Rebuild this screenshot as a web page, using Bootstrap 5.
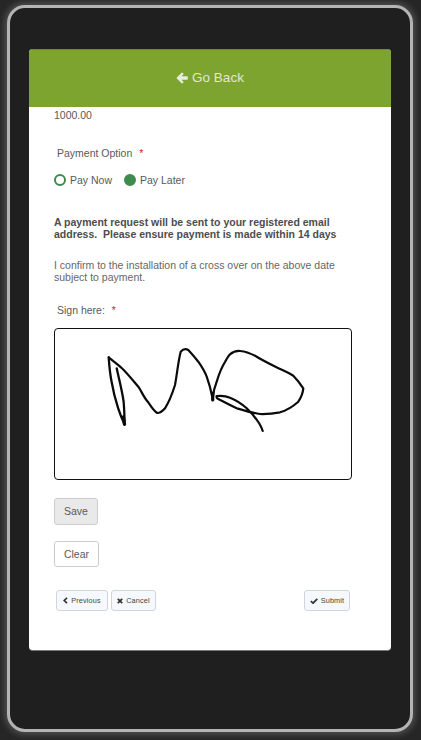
<!DOCTYPE html>
<html lang="en">
<head>
<meta charset="utf-8">
<title>Payment</title>
<link href="https://cdn.jsdelivr.net/npm/bootstrap@5.3.0/dist/css/bootstrap.min.css" rel="stylesheet">
<style>
html,body{height:100%;margin:0;background:#262626;overflow:hidden}
body{font-family:"Liberation Sans",Arial,sans-serif;font-size:10.5px;line-height:12px;color:#595959;padding:5px 8px 8px 7px}
.phone-frame{height:727px;border:3px solid #b4b4b4;border-radius:18px;background:#1f1f1f;box-shadow:0 0 7px 2px rgba(255,255,255,.22);padding:41px 19px 0}
.pay-card{height:602px;border:0 solid #777;border-bottom-width:1px;border-radius:4px;background:#fff;overflow:hidden}
.pay-head{height:58px;background:#7ca42e;color:#e2e6d8;font-size:13.5px;border-top:1px solid #777;padding-bottom:1px}
.pay-body{padding:0 0 0 25px;width:323px}
.amount{padding-top:2px;height:40px}
.field-label{padding-left:3px;height:12px;line-height:12px}
.req{color:#e02020;margin-left:4px}
.radio-row{margin-top:15px;height:12px}
.radio-opt{color:#595959}
.radio-dot{appearance:none;width:12px;height:12px;margin:0;border:2px solid #3f8a4e;border-radius:50%;background:#fff;flex:none}
.radio-dot:checked{background:#3f8a4e}
.notice{margin-top:30px;font-weight:700;line-height:12px;color:#4d4d4d}
.confirm{margin-top:19px;line-height:12px;color:#666}
.sign-label{margin-top:21px}
.sign-box{display:block;margin-top:12px;width:298px;height:152px;border:1px solid #111;border-radius:4px;background:#fff}
.act-btn{font-size:10.5px;line-height:12px;color:#595959;border:1px solid #ccc;border-radius:3px;padding:0 0 1px;display:flex;align-items:center;justify-content:center}
.act-btn:hover{color:#595959}
.btn-save{width:44px;height:27px;margin-top:18px;background:#e9e9e9}
.btn-clear{width:45px;height:26px;margin-top:16px;background:#fff}
.step-row{margin-top:23px;padding-left:2px;width:296px}
.step-btn{height:21px;font-size:7.300px;line-height:9px;color:#444;font-weight:400;letter-spacing:.15px;background:#f5f9fd;border:1px solid #d0d5da;border-radius:3px;padding:0;gap:3px;display:flex;align-items:center;justify-content:center}
.step-prev{width:52px}.step-cancel{width:45px;margin-left:3px}.step-submit{width:46px}
</style>
</head>
<body>
<div class="phone-frame">
  <div class="pay-card d-flex flex-column">
    <div class="pay-head d-flex align-items-center justify-content-center gap-1">
      <svg width="12" height="12" viewBox="0 0 12 12" aria-hidden="true"><path fill="#e8ebdf" d="M.4 6 5.6.8a.7.7 0 0 1 1 0l.7.7a.7.7 0 0 1 0 1L5.4 4.3h5.7a.7.7 0 0 1 .7.7v2a.7.7 0 0 1-.7.7H5.4l1.9 1.8a.7.7 0 0 1 0 1l-.7.7a.7.7 0 0 1-1 0z"/></svg>
      <span>Go Back</span>
    </div>
    <div class="pay-body">
      <div class="amount">1000.00</div>
      <div class="field-label">Payment Option <span class="req">*</span></div>
      <div class="radio-row d-flex align-items-center">
        <label class="radio-opt d-flex align-items-center gap-1 me-2"><input class="radio-dot" type="radio" name="pay"> Pay Now</label>
        <label class="radio-opt d-flex align-items-center gap-1 ms-1"><input class="radio-dot" type="radio" name="pay" checked> Pay Later</label>
      </div>
      <div class="notice">A payment request will be sent to your registered email address.&nbsp; Please ensure payment is made within 14 days</div>
      <div class="confirm">I confirm to the installation of a cross over on the above date subject to payment.</div>
      <div class="field-label sign-label">Sign here: <span class="req">*</span></div>
      <svg class="sign-box" viewBox="55 329 296 150" aria-label="Signature">
        <g fill="none" stroke="#0b0b0b" stroke-width="2.200" stroke-linecap="round" stroke-linejoin="round">
          <path stroke-width="2.300" d="M116.700 368.300C118.500 377 122 390 123.600 401.500C124.300 409 124.500 417 124.600 424.300C122.500 420 120 414 118.200 408.300C115.500 400 113 390 111.600 381.700C110 374 109.200 365 108.700 357.400"/>
          <path stroke-width="3.400" d="M123.300 417 124.500 424.300"/>
          <path d="M108.700 357.400C113 361 118 364.500 121.700 368C127 373 133 380.500 138.300 386.700C142 392 144 398 148.300 402.300C151 406.500 154 411 157.300 413C161 413 163.500 410 165 408.300C169 402 172.500 393 175 385C177 375 178 362 180.700 351.700C183 349 186 348.800 188.300 350C192 354 195 357.500 198.300 361.700C202 367 205 372 206.700 376.700C209 383 211.300 392 212.500 398"/>
          <path stroke-width="3.200" d="M212.700 393 212.700 400"/>
          <path d="M212.800 398C213.500 390 215 386 216.700 381.700C219 374 222.500 366 225 362C227 358.500 228.500 355.800 230 354.300C233 351.800 237 350.800 240 351C246 351.500 251 353.500 256.700 356.700C263 360.500 270 364 276 367C282 370 288 372.500 293.300 375.700C297 379.500 300.500 384 303.300 388.300C303 392 301 397.500 298.300 401.700C294 405.500 288 410 280 412.300C274 413.500 267 414.200 260 414C252 413 244 410.500 236.700 408.300C231 405.500 225 402.500 218.300 399C216.800 398.200 216.300 397 216.700 396C222 395.500 227 396.300 230 397.700C237 400.500 242 404 246.700 408.300C252 413.500 256 418.500 259 423C260.500 425.500 262 428.500 262.700 431"/>
        </g>
      </svg>
      <button type="button" class="btn act-btn btn-save">Save</button>
      <button type="button" class="btn act-btn btn-clear">Clear</button>
      <div class="step-row d-flex">
        <button type="button" class="btn step-btn step-prev">
          <svg width="5" height="7" viewBox="0 0 5 7" aria-hidden="true"><path fill="none" stroke="#333" stroke-width="1.700" d="M4 .8 1.200 3.500 4 6.200"/></svg>Previous</button>
        <button type="button" class="btn step-btn step-cancel">
          <svg width="6" height="6" viewBox="0 0 6 6" aria-hidden="true"><path fill="none" stroke="#333" stroke-width="1.800" d="M.8.8l4.400 4.400M5.200.8.800 5.200"/></svg>Cancel</button>
        <button type="button" class="btn step-btn step-submit ms-auto">
          <svg width="8" height="6" viewBox="0 0 8 6" aria-hidden="true"><path fill="none" stroke="#333" stroke-width="1.700" d="M.8 3 3 5.200 7.300.8"/></svg>Submit</button>
      </div>
    </div>
  </div>
</div>
<script src="https://cdn.jsdelivr.net/npm/bootstrap@5.3.0/dist/js/bootstrap.bundle.min.js"></script>
</body>
</html>
